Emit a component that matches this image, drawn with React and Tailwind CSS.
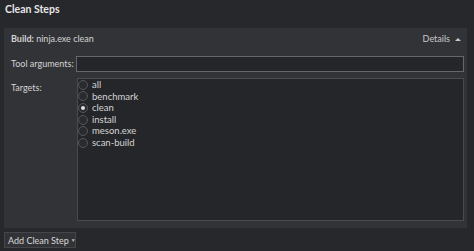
import React from 'react';

const targets = ['all', 'benchmark', 'clean', 'install', 'meson.exe', 'scan-build'];

const Radio = ({ checked }) => (
  <span className="w-[10px] h-[10px] rounded-full border border-[#55565a] bg-[#2a2b2e] flex items-center justify-center shrink-0">
    {checked && <span className="w-[4px] h-[4px] rounded-full bg-[#e0e0e0]" />}
  </span>
);

export default function App() {
  return (
    <div
      className="w-[474px] h-[251px] bg-[#27282b] text-[#d4d4d4] overflow-hidden flex flex-col whitespace-nowrap"
      style={{ fontFamily: 'Lato, "Noto Sans", sans-serif' }}
    >
      {/* Title */}
      <div className="h-[28px] px-[5px] pt-[1px] text-[10.5px] leading-[16px] font-bold text-[#e6e6e6]">Clean Steps</div>

      {/* Build step panel */}
      <div className="ml-[4px] mr-[7px] h-[200px] bg-[#323336] flex flex-col">
        <div className="h-[22px] pl-[7px] pr-[6px] flex items-center justify-between text-[9px]">
          <span>
            <span className="font-bold">Build:</span> ninja.exe clean
          </span>
          <span className="flex items-center gap-[5px] text-[#c8c8c8]">
            Details
            <span className="w-0 h-0 border-l-[3px] border-r-[3px] border-b-[3px] border-l-transparent border-r-transparent border-b-[#c8c8c8]" />
          </span>
        </div>

        <div className="flex flex-col gap-[6px] pt-[6px] pl-[7px] pr-[3px] text-[9px]">
          <div className="flex items-center">
            <span className="w-[65px]">Tool arguments:</span>
            <div className="flex-1 h-[16px] bg-[#252629] border border-[#66676a]" />
          </div>
          <div className="flex items-start">
            <span className="w-[66px] pt-[3px]">Targets:</span>
            <div className="flex-1 h-[143px] bg-[#252629] border border-[#4a4b4e] flex flex-col">
              {targets.map((t) => (
                <div key={t} className="h-[11.6px] flex items-center gap-[4px] leading-none">
                  <Radio checked={t === 'clean'} />
                  <span className="text-[9.5px]">{t}</span>
                </div>
              ))}
            </div>
          </div>
        </div>
      </div>

      {/* Add button */}
      <div className="pl-[4px] pt-[4px]">
        <button className="h-[16px] w-[72px] bg-[#323336] border border-[#45464a] text-[9px] text-[#d8d8d8] flex items-center pl-[3px] gap-[2px] leading-none">
          Add Clean Step
          <span className="text-[5px] text-[#bbbbbb]">▼</span>
        </button>
      </div>
    </div>
  );
}
